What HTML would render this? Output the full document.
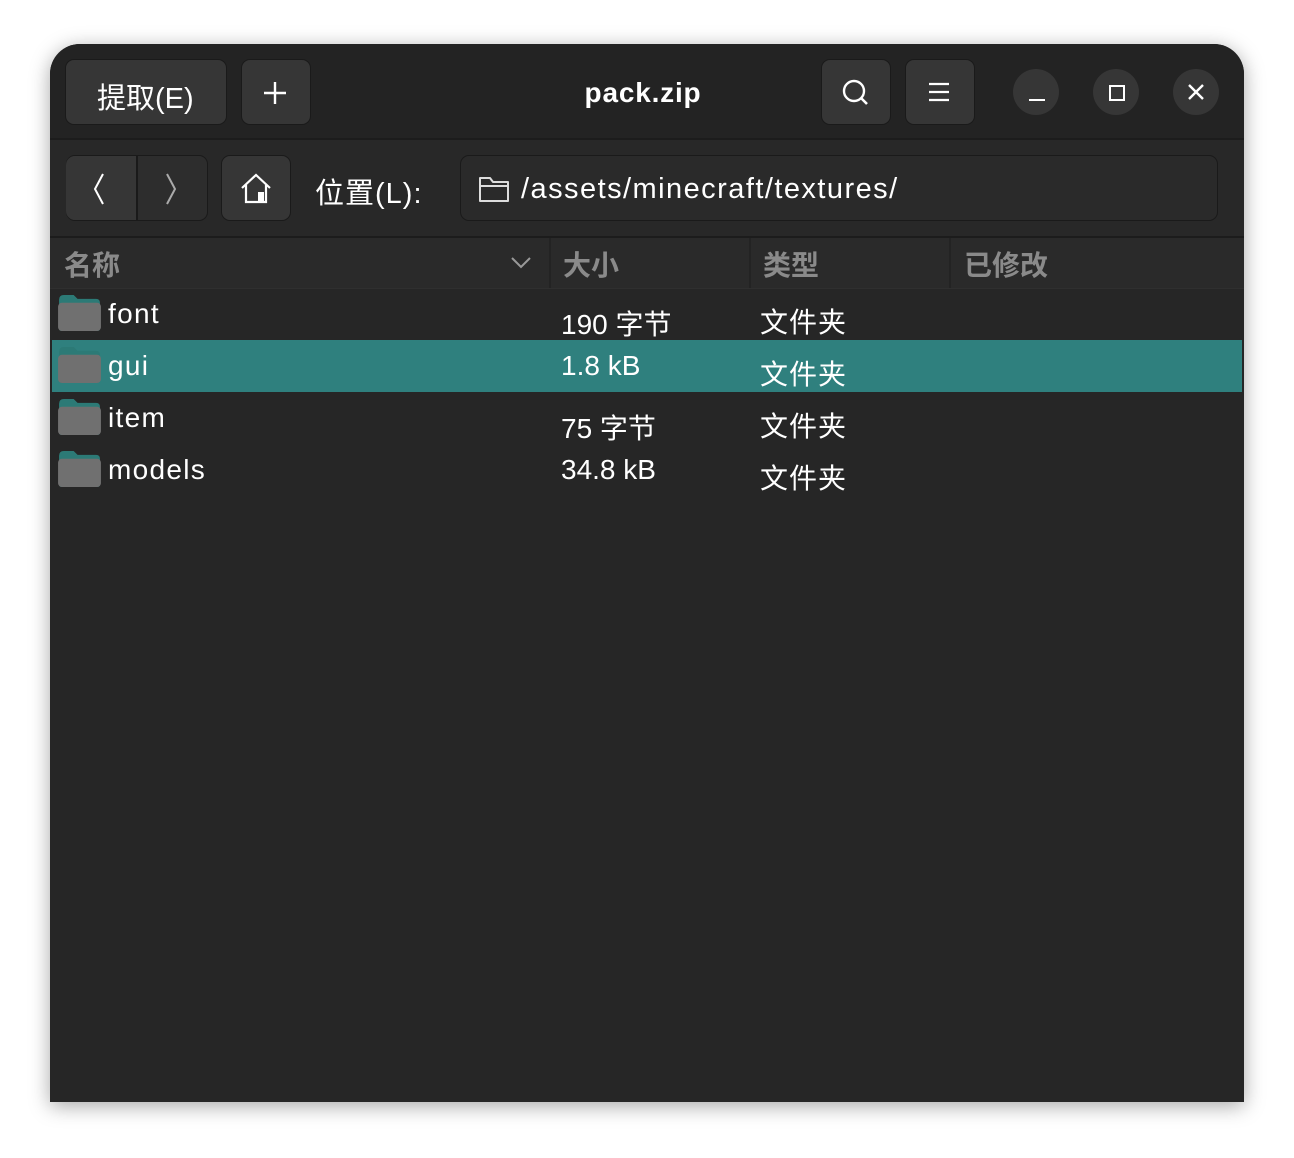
<!DOCTYPE html>
<html><head><meta charset="utf-8"><style>
body{margin:0;width:1294px;height:1158px;background:#fff;position:relative;overflow:hidden;font-family:"Liberation Sans","Noto Sans CJK SC",sans-serif;color:#fff}
.win{position:absolute;left:50px;top:44px;width:1194px;height:1058px;background:#262626;border-radius:30px 30px 0 0;box-shadow:0 4px 20px rgba(0,0,0,.35);overflow:hidden}
.a{position:absolute}
.btn{position:absolute;background:#363636;border:1px solid #1a1a1a;border-radius:9px;box-sizing:border-box}
.circ{position:absolute;width:46px;height:46px;border-radius:50%;background:#363636}
.t{position:absolute;white-space:nowrap}
.hd{color:#8a8a8a;font-weight:bold;font-size:28px}
.fold{position:absolute;left:7px;width:45px;height:38px}
.row{font-size:28px}
.nm{letter-spacing:1.3px}
</style></head><body>
<div class="win">
 <div class="a" style="left:0;top:0;width:1194px;height:94px;background:#232323;border-bottom:2px solid #1c1c1c"></div>
 <div class="btn" style="left:15px;top:15px;width:162px;height:66px"></div>
 <div class="t" style="left:47px;top:31px;font-size:29px">提取(E)</div>
 <div class="btn" style="left:191px;top:15px;width:70px;height:66px"></div>
 <svg class="a" style="left:211px;top:35px" width="28" height="28"><path d="M14 3v22M3 14h22" stroke="#fff" stroke-width="2.4"/></svg>
 <div class="t" style="left:0;width:1186px;text-align:center;top:33px;font-size:28px;font-weight:bold;letter-spacing:0.8px">pack.zip</div>
 <div class="btn" style="left:771px;top:15px;width:70px;height:66px"></div>
 <svg class="a" style="left:790px;top:33px" width="32" height="32"><circle cx="14" cy="14" r="10" stroke="#fff" stroke-width="2.4" fill="none"/><path d="M21 21l6 6" stroke="#fff" stroke-width="2.6"/></svg>
 <div class="btn" style="left:855px;top:15px;width:70px;height:66px"></div>
 <svg class="a" style="left:878px;top:38px" width="24" height="20"><path d="M1 2h20M1 10h20M1 18h20" stroke="#fff" stroke-width="2.2"/></svg>
 <div class="circ" style="left:963px;top:25px"></div>
 <div class="a" style="left:979px;top:55px;width:16px;height:2px;background:#fff"></div>
 <div class="circ" style="left:1043px;top:25px"></div>
 <div class="a" style="left:1059px;top:41px;width:12px;height:12px;border:2px solid #fff"></div>
 <div class="circ" style="left:1123px;top:25px"></div>
 <svg class="a" style="left:1137px;top:39px" width="18" height="18"><path d="M2 2l14 14M16 2L2 16" stroke="#fff" stroke-width="2.4"/></svg>

 <div class="a" style="left:0;top:96px;width:1194px;height:96px;background:#282828;border-bottom:2px solid #1c1c1c"></div>
 <div class="btn" style="left:16px;top:111px;width:142px;height:66px;background:#2d2d2d"></div>
 <div class="a" style="left:16px;top:112px;width:70px;height:64px;background:#363636;border-radius:9px 0 0 9px"></div>
 <div class="a" style="left:86px;top:112px;width:2px;height:64px;background:#1a1a1a"></div>
 <svg class="a" style="left:40px;top:128px" width="20" height="34"><path d="M13 2L5 17l8 15" stroke="#fff" stroke-width="2" fill="none"/></svg>
 <svg class="a" style="left:112px;top:128px" width="20" height="34"><path d="M5 2l8 15-8 15" stroke="#aaa" stroke-width="2" fill="none"/></svg>
 <div class="btn" style="left:171px;top:111px;width:70px;height:66px"></div>
 <svg class="a" style="left:189px;top:128px" width="34" height="34"><path d="M3 16L17 3l14 13M7 13v17h20V13" stroke="#fff" stroke-width="2.2" fill="none"/><rect x="19" y="20" width="6" height="10" fill="#fff"/></svg>
 <div class="t" style="left:265px;top:126px;font-size:29px;letter-spacing:1px">位置(L):</div>
 <div class="btn" style="left:410px;top:111px;width:758px;height:66px;background:#2a2a2a"></div>
 <svg class="a" style="left:427px;top:130px" width="34" height="30"><path d="M3 4h10l3 4h15v19H3z" stroke="#ddd" stroke-width="2" fill="none" stroke-linejoin="round"/><path d="M3 12h28" stroke="#ddd" stroke-width="2"/></svg>
 <div class="t" style="left:471px;top:129px;font-size:29px;letter-spacing:1.45px">/assets/minecraft/textures/</div>

 <div class="a" style="left:0;top:194px;width:1194px;height:50px;background:#2a2a2a;border-bottom:1px solid #2f2f2f"></div>
 <div class="a" style="left:499px;top:194px;width:2px;height:50px;background:#232323"></div>
 <div class="a" style="left:699px;top:194px;width:2px;height:50px;background:#232323"></div>
 <div class="a" style="left:899px;top:194px;width:2px;height:50px;background:#232323"></div>
 <div class="t hd" style="left:14px;top:200px">名称</div>
 <svg class="a" style="left:460px;top:212px" width="22" height="14"><path d="M2 2l9 9 9-9" stroke="#999" stroke-width="2" fill="none"/></svg>
 <div class="t hd" style="left:513px;top:200px">大小</div>
 <div class="t hd" style="left:713px;top:200px">类型</div>
 <div class="t hd" style="left:914px;top:200px">已修改</div>

 <div class="a" style="left:2px;top:296px;width:1190px;height:52px;background:#2f807e"></div>

 <svg width="0" height="0" style="position:absolute"><defs><g id="f"><path d="M2 6q0-5 5-5h10l4 4h19q4 0 4 4v26q0 3-3 3H5q-3 0-3-3z" fill="#2c7a76"/><rect x="1" y="9" width="44" height="29" rx="4" fill="#707070"/></g></defs></svg>
 <svg class="fold" style="top:250px" viewBox="0 0 46 39"><use href="#f"/></svg>
 <svg class="fold" style="top:302px" viewBox="0 0 46 39"><use href="#f"/></svg>
 <svg class="fold" style="top:354px" viewBox="0 0 46 39"><use href="#f"/></svg>
 <svg class="fold" style="top:406px" viewBox="0 0 46 39"><use href="#f"/></svg>

 <div class="t row nm" style="left:58px;top:254px">font</div>
 <div class="t row nm" style="left:58px;top:306px">gui</div>
 <div class="t row nm" style="left:58px;top:358px">item</div>
 <div class="t row nm" style="left:58px;top:410px">models</div>
 <div class="t row" style="left:511px;top:259px">190 字节</div>
 <div class="t row" style="left:511px;top:306px">1.8 kB</div>
 <div class="t row" style="left:511px;top:363px">75 字节</div>
 <div class="t row" style="left:511px;top:410px">34.8 kB</div>
 <div class="t row" style="left:710px;top:257px;letter-spacing:1px">文件夹</div>
 <div class="t row" style="left:710px;top:309px;letter-spacing:1px">文件夹</div>
 <div class="t row" style="left:710px;top:361px;letter-spacing:1px">文件夹</div>
 <div class="t row" style="left:710px;top:413px;letter-spacing:1px">文件夹</div>
</div>
</body></html>
